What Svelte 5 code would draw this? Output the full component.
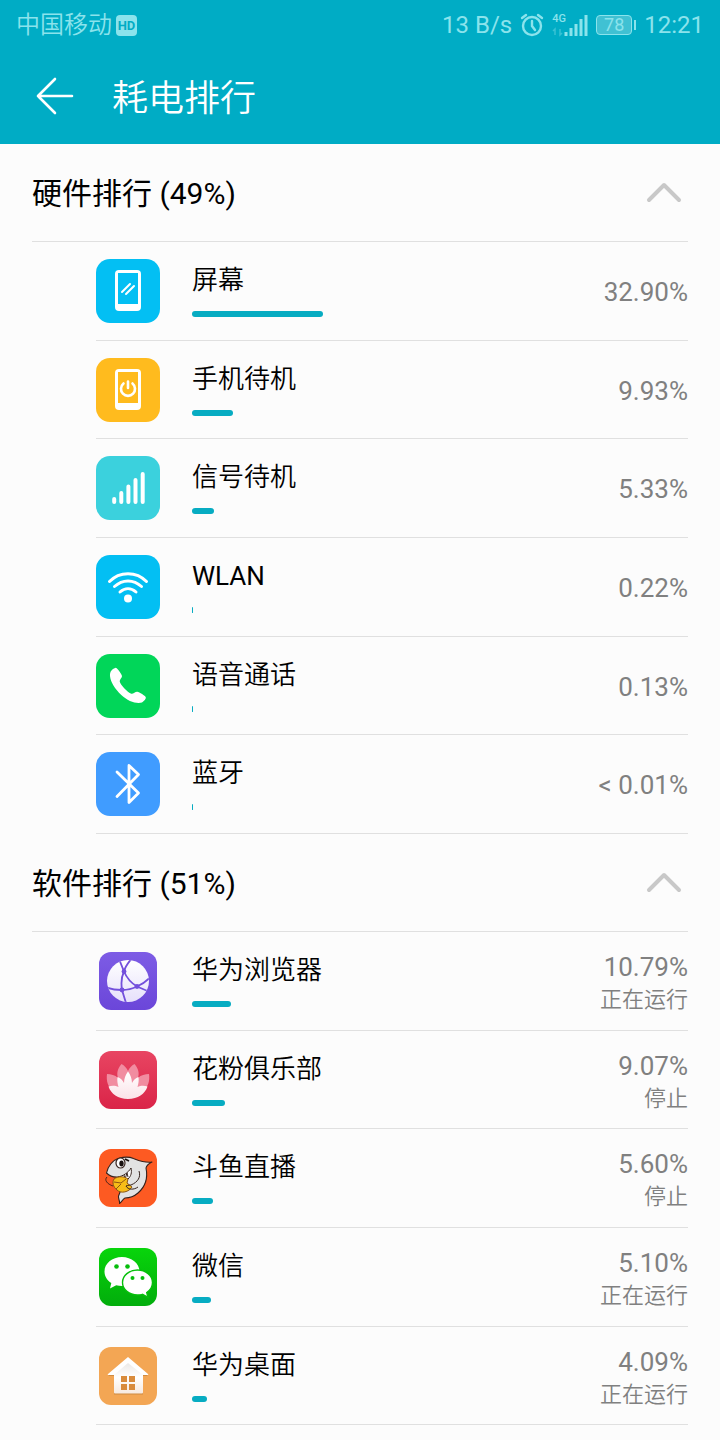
<script>
  let groups = $state([
    {
      title: '硬件排行 (49%)',
      open: true,
      items: [
        { icon: 'screen', name: '屏幕', percent: '32.90%', bar: 32.7 },
        { icon: 'standby', name: '手机待机', percent: '9.93%', bar: 10.3 },
        { icon: 'signal', name: '信号待机', percent: '5.33%', bar: 5.5 },
        { icon: 'wlan', name: 'WLAN', percent: '0.22%', bar: 0.25, latin: true },
        { icon: 'call', name: '语音通话', percent: '0.13%', bar: 0.25 },
        { icon: 'bluetooth', name: '蓝牙', percent: '< 0.01%', bar: 0.25 }
      ]
    },
    {
      title: '软件排行 (51%)',
      open: true,
      items: [
        { icon: 'browser', name: '华为浏览器', percent: '10.79%', bar: 9.75, state: '正在运行' },
        { icon: 'club', name: '花粉俱乐部', percent: '9.07%', bar: 8.25, state: '停止' },
        { icon: 'douyu', name: '斗鱼直播', percent: '5.60%', bar: 5.25, state: '停止' },
        { icon: 'wechat', name: '微信', percent: '5.10%', bar: 4.75, state: '正在运行' },
        { icon: 'home', name: '华为桌面', percent: '4.09%', bar: 3.75, state: '正在运行' }
      ]
    }
  ]);
</script>

{#snippet icon(name)}
  <svg class="icon" viewBox="0 0 64 64" aria-hidden="true">
    {#if name === 'screen' || name === 'standby'}
      <rect width="64" height="64" rx="14" fill={name === 'screen' ? '#03bff3' : '#ffbb1e'} />
      <rect x="19" y="11" width="26" height="41" rx="4" fill="#fff" />
      <rect x="22" y="14" width="20" height="31" fill={name === 'screen' ? '#03bff3' : '#ffbb1e'} />
      {#if name === 'screen'}
        <path d="M26 33l8-8M30 35l8-8" stroke="#fff" stroke-width="2" stroke-linecap="round" />
      {:else}
        <path d="M27.5 25.5a7 7 0 1 0 9 0M32 23.5v6.500" fill="none" stroke="#fff" stroke-width="2.600" stroke-linecap="round" />
      {/if}
    {:else if name === 'signal'}
      <rect width="64" height="64" rx="14" fill="#3bd1dd" />
      <path d="M18.200 43v3M25.300 37v9M32.400 30.500v15.500M39.500 24v22M46.700 18v28" stroke="#fff" stroke-width="4" stroke-linecap="round" />
    {:else if name === 'wlan'}
      <rect width="64" height="64" rx="14" fill="#03bff3" />
      <g fill="none" stroke="#fff" stroke-width="3" stroke-linecap="round">
        <path d="M13.500 26.500c10-10.500 27-10.500 37 0M18.500 31.500c8-7.500 19-7.500 27 0M24 37c5-4.500 11-4.500 16 0" />
      </g>
      <circle cx="32" cy="43.500" r="4" fill="#fff" />
    {:else if name === 'call'}
      <rect width="64" height="64" rx="14" fill="#01d659" />
      <path d="M15.500 16.500c1-1.200 2.800-2.400 4.200-2.700 1.200-.2 5.800 6.200 6.300 8.200.3 1.500-2.500 3.600-2.300 5.200.4 3.200 7.800 11.300 11.600 12.500 1.800.5 4.200-2.300 6-2 2 .4 8 3.900 8.500 5.500.5 1.800-1.800 3.600-3.800 5.300-5.500 1.700-14.300-1.300-20.700-7.500C19 35 14.500 28 14 22c-.2-2.200.3-4.200 1.500-5.500z" fill="#fff" />
    {:else if name === 'bluetooth'}
      <rect width="64" height="64" rx="14" fill="#409cff" />
      <path d="M21 20l21.500 21-9.500 9.500V13.500L42.500 22.500 21 44.500" fill="none" stroke="#fff" stroke-width="2.800" stroke-linecap="round" stroke-linejoin="round" />
    {:else if name === 'browser'}
      <defs>
        <linearGradient id="browser-bg" x2="0" y2="1"><stop stop-color="#7d5ce5" /><stop offset="1" stop-color="#6b46d9" /></linearGradient>
        <linearGradient id="browser-globe" x2="0" y2="1"><stop stop-color="#fff" /><stop offset="1" stop-color="#e6e0fb" /></linearGradient>
        <clipPath id="globe"><circle cx="32" cy="32" r="21" /></clipPath>
      </defs>
      <rect x="3" y="3" width="58" height="58" rx="12" fill="url(#browser-bg)" />
      <circle cx="32" cy="32" r="21" fill="url(#browser-globe)" />
      <g clip-path="url(#globe)" fill="none" stroke="#7350dc" stroke-width="1.800">
        <path d="M23 10l5 12.500c-3 6-3 12-2 18.500l4 13M36 9c-3 4-7 8-8 13.500 3 7 8 12 13 15l14 6M9 38c5 2 11 3 17 3 5 0 10-1 15-3.500 5-2 9-5 12-8" />
      </g>
      <g fill="#7350dc"><circle cx="28" cy="22.500" r="2.400" /><circle cx="26" cy="41" r="2.400" /><circle cx="41" cy="37.500" r="2.400" /></g>
    {:else if name === 'club'}
      <defs>
        <linearGradient id="club-bg" x2="0" y2="1"><stop stop-color="#e84562" /><stop offset="1" stop-color="#da2448" /></linearGradient>
        <linearGradient id="petal" x2="0" y2="1"><stop stop-color="#fff" /><stop offset="1" stop-color="#fbe2e8" /></linearGradient>
      </defs>
      <rect x="3" y="3" width="58" height="58" rx="12" fill="url(#club-bg)" />
      <path d="M11 26c4 0 8 1 11 4-1.500-5-.5-9 3.500-14 3 1.500 5 4 6.500 7 1.500-3 3.500-5.500 6.500-7 4 5 5 9 3.500 14 3-3 7-4 11-4 1 7-1 13-6 17H17c-5-4-7-10-6-17z" fill="#f18ca0" />
      <path d="M12.500 38.500c3-1 7-1 10 .5-1-3-1.500-7-1-10 3 1 5 3 6.500 6 .2-5 1.500-8 4-11.500 2.500 3.500 3.800 6.500 4 11.500 1.500-3 3.500-5 6.500-6 .5 3 0 7-1 10 3-1.500 7-1.500 10-.5C49 46 42 51 32 51s-17-5-19.500-12.500z" fill="url(#petal)" />
    {:else if name === 'douyu'}
      <rect x="3" y="3" width="58" height="58" rx="12" fill="#fd5a22" />
      <path d="M10.500 27c1-6 6-13 13-15 5-1.200 10-1.200 14 .5 6 2.300 11 4.500 18.500 3.500-3 1.500-5.500 3-6 6 2 10-1 19-8 25-4 3.500-9 5-13 5-2 1-3 3.500-5.500 5.500.5-3-1.500-5-1-7.500l2-5c-4-4-5-10-2-14-5 .5-9-1-12-4z" fill="#e2e2e2" stroke="#35221d" stroke-width="1.100" stroke-linejoin="round" />
      <path d="M22 31c5-1 10-4 13-9 1 5 0 8-3 11-3 1-6 0-8-2" fill="#fff" stroke="#35221d" stroke-width="1" stroke-linejoin="round" />
      <path d="M28 29l1 4 2-6 1 4" fill="none" stroke="#35221d" stroke-width="1" />
      <ellipse cx="24.500" cy="17" rx="4.500" ry="5" fill="#fff" stroke="#35221d" stroke-width="1.200" />
      <ellipse cx="25.500" cy="17.500" rx="2.200" ry="3" fill="#17100e" />
      <path d="M29 13l4 2" stroke="#17100e" stroke-width="1.600" />
      <path d="M11 31c-3 3 0 7 6 9" fill="none" stroke="#4d251c" stroke-width="1" />
      <path d="M18 33c4-3 10-3 14 0l-1 4 5 4c-3 5-11 7-15 3-4-3-5-8-3-11z" fill="#f7bd18" stroke="#8b5513" stroke-width="1" />
      <path d="M18 36l7 1 5-4M20 43l5-5" fill="none" stroke="#8b5513" stroke-width="1" />
      <path d="M43 25c2 6-1 11-8 14 0 0-3 0-5 1 2 4 8 4 12 1" fill="none" stroke="#35221d" stroke-width="1" />
    {:else if name === 'wechat'}
      <defs>
        <linearGradient id="wechat-bg" x2="0" y2="1"><stop stop-color="#08d50b" /><stop offset="1" stop-color="#02ad0c" /></linearGradient>
      </defs>
      <rect x="3" y="3" width="58" height="58" rx="12" fill="url(#wechat-bg)" />
      <path d="M26 12c-10 0-17.500 6.500-17.500 14.500 0 4.800 2.600 9 6.800 11.500L14 43.500l6.200-3.200c2 .5 3.800.8 5.800.8 9.500 0 17.500-6.500 17.500-14.600S35.500 12 26 12z" fill="#fff" />
      <path d="M41.500 25c-8.300 0-15 5.500-15 12.500s6.700 12.500 15 12.500c1.800 0 3.500-.2 5-.7l5.500 3-1.300-4.800c3.600-2.300 5.800-5.900 5.800-10 0-7-6.700-12.500-15-12.500z" fill="#fff" stroke="#06bf0b" stroke-width="1.400" />
      <g fill="#06bd0b"><circle cx="20.500" cy="21.500" r="2.300" /><circle cx="31.500" cy="21.500" r="2.300" /><circle cx="36.500" cy="33" r="2" /><circle cx="46.500" cy="33" r="2" /></g>
    {:else if name === 'home'}
      <defs>
        <linearGradient id="house" x2="0" y2="1"><stop stop-color="#e9e6e4" /><stop offset=".5" stop-color="#fff" /><stop offset="1" stop-color="#f7e9df" /></linearGradient>
      </defs>
      <rect x="3" y="3" width="58" height="58" rx="12" fill="#f3a654" />
      <path d="M12 32L32 15.500 52 32h-5v18.500H18V32z" fill="#b87935" opacity=".6" />
      <path d="M18 29l14-12 15 12v19.500a1 1 0 0 1-1 1H19a1 1 0 0 1-1-1z" fill="url(#house)" />
      <path d="M12 30L32 13l20 17c.6.6.3 1-.5 1H47L32 19 18 31h-5.500c-.8 0-1-.5-.5-1z" fill="#fff" />
      <path d="M25 32h6v6h-6zM33 32h6v6h-6zM25 40h6v6h-6zM33 40h6v6h-6z" fill="#d98b3c" />
    {/if}
  </svg>
{/snippet}

<header>
  <div class="status">
    <div class="carrier">
      <span>中国移动</span>
      <span class="hd">HD</span>
    </div>
    <div class="indicators">
      <span>13 B/s</span>
      <svg width="24" height="24" viewBox="0 0 24 24" fill="none" stroke="currentColor" stroke-width="2.400" stroke-linecap="round" aria-hidden="true">
        <circle cx="12" cy="13" r="9" />
        <path d="M12 8v5l3 4M2 5l4-3M22 5l-4-3" />
      </svg>
      <div class="mobile">
        <span class="network">4G</span>
        <svg width="36" height="24" viewBox="0 0 36 24" aria-hidden="true">
          <path d="M3 22v-6l-2 2M8 16v6l2-2" fill="none" stroke="currentColor" stroke-width="1.500" opacity=".4" />
          <path d="M14 19v4M19 15v8M24 11v12M29 6v17M34 2v21" stroke="currentColor" stroke-width="3" />
        </svg>
      </div>
      <div class="battery"><span>78</span></div>
      <time>12:21</time>
    </div>
  </div>
  <div class="toolbar">
    <button class="back" aria-label="返回">
      <svg width="40" height="40" viewBox="0 0 40 40" fill="none" stroke="currentColor" stroke-width="2.600" stroke-linecap="round" stroke-linejoin="round" aria-hidden="true">
        <path d="M19 3L2 20l17 17M2 20h34" />
      </svg>
    </button>
    <h1>耗电排行</h1>
  </div>
</header>

<main>
  {#each groups as group}
    <section>
      <h2>
        <button class="toggle" aria-expanded={group.open} onclick={() => (group.open = !group.open)}>
          <span>{group.title}</span>
          <svg class:closed={!group.open} width="48" height="48" viewBox="0 0 48 48" fill="none" stroke="#c8c8c8" stroke-width="4" stroke-linecap="round" stroke-linejoin="round" aria-hidden="true">
            <path d="M9 31l15-15 15 15" />
          </svg>
        </button>
      </h2>
      {#if group.open}
        <ul>
          {#each group.items as item}
            <li>
              {@render icon(item.icon)}
              <div class="usage">
                <span class="name" class:latin={item.latin}>{item.name}</span>
                <div class="track">
                  <div class="bar" style="width: {item.bar}%"></div>
                </div>
              </div>
              <div class="figures" class:double={item.state}>
                <span class="percent">{item.percent}</span>
                {#if item.state}
                  <span class="state">{item.state}</span>
                {/if}
              </div>
            </li>
          {/each}
        </ul>
      {/if}
    </section>
  {/each}
</main>

<style>
  :global(body) {
    margin: 0;
    background: #fcfcfc;
    color: #000;
    font-family: Roboto, 'Noto Sans CJK SC', sans-serif;
  }

  h1,
  h2,
  ul {
    margin: 0;
    padding: 0;
    font-weight: 400;
  }

  button {
    border: 0;
    padding: 0;
    background: none;
    color: inherit;
    font: inherit;
    cursor: pointer;
  }

  svg {
    display: block;
    flex: none;
  }

  header {
    background: #00acc5;
    color: #fff;
  }

  .status {
    display: flex;
    align-items: center;
    justify-content: space-between;
    box-sizing: border-box;
    height: 48px;
    padding: 2px 16px 0;
    color: #8be3ec;
    font-size: 24px;
    line-height: 46px;
  }

  .carrier,
  .indicators,
  .mobile {
    display: flex;
    align-items: center;
  }

  .carrier {
    gap: 4px;
    font-weight: 350;
  }

  .hd {
    width: 21px;
    border-radius: 4px;
    background: #8be3ec;
    color: #00acc5;
    font-size: 13px;
    font-weight: 700;
    line-height: 21px;
    text-align: center;
  }

  .indicators {
    gap: 8px;
  }

  .mobile {
    position: relative;
  }

  .network {
    position: absolute;
    top: 0;
    left: 0;
    font-size: 11px;
    font-weight: 500;
    line-height: 12px;
  }

  .battery {
    position: relative;
    box-sizing: border-box;
    width: 36px;
    height: 20px;
    margin-right: 4px;
    border: 1px solid #8be3ec;
    border-radius: 4px;
    background: #40c1d3;
    font-size: 18px;
    line-height: 18px;
    text-align: center;
  }

  .battery::after {
    content: '';
    position: absolute;
    top: 4px;
    right: -5px;
    width: 2px;
    height: 10px;
    background: #8be3ec;
  }

  .toolbar {
    display: flex;
    align-items: center;
    gap: 36px;
    height: 96px;
    padding: 0 36px;
  }

  h1 {
    padding-top: 6px;
    font-size: 36px;
    font-weight: 350;
    line-height: 48px;
  }

  .toggle {
    display: flex;
    align-items: center;
    justify-content: space-between;
    box-sizing: border-box;
    width: calc(100% - 64px);
    height: 98px;
    margin: 0 32px;
    border-bottom: 1px solid #e0e0e0;
    font-size: 30px;
    line-height: 40px;
    text-align: left;
  }

  .toggle span {
    padding-top: 2px;
  }

  .closed {
    transform: rotate(180deg);
  }

  ul {
    display: grid;
    grid-auto-rows: 99px 98px 99px;
    padding: 0 32px 0 96px;
    list-style: none;
  }

  li {
    display: flex;
    align-items: center;
    border-bottom: 1px solid #e0e0e0;
  }

  .icon {
    width: 64px;
    height: 64px;
    margin-right: 32px;
  }

  .usage {
    flex: 1;
    min-width: 0;
    padding-bottom: 4px;
  }

  .name {
    display: block;
    margin-bottom: 12px;
    font-size: 26px;
    font-weight: 350;
    line-height: 38px;
  }

  .latin {
    font-weight: 400;
  }

  .track {
    height: 6px;
  }

  .bar {
    height: 6px;
    border-radius: 3px;
    background: #07acc2;
  }

  .figures {
    display: flex;
    flex-direction: column;
    width: 96px;
    padding-top: 2px;
    color: #808080;
    text-align: right;
    white-space: nowrap;
  }

  .double {
    padding-top: 6px;
  }

  .percent {
    font-size: 26px;
    line-height: 32px;
  }

  .state {
    font-size: 22px;
    font-weight: 350;
    line-height: 34px;
  }
</style>
